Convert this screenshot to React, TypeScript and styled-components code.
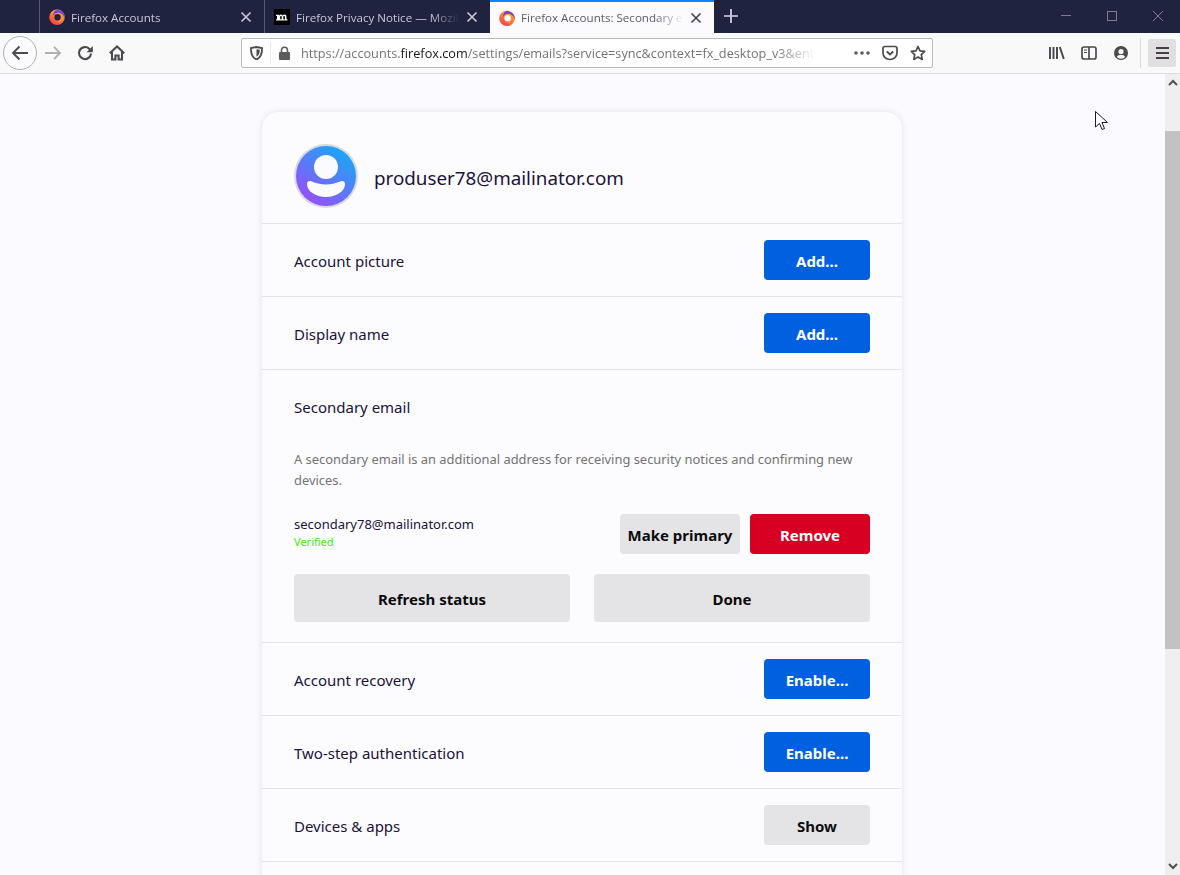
import styled, { createGlobalStyle } from "styled-components";

const GlobalStyle = createGlobalStyle`
  html, body { margin: 0; padding: 0; height: 100%; overflow: hidden; }
  #root { height: 100%; }
  * { box-sizing: border-box; }
`;

const uiFont = `"Open Sans", "Noto Sans", "Liberation Sans", sans-serif`;
const pageFont = `"Noto Sans", "Open Sans", "Liberation Sans", sans-serif`;

const Firefox = ({ id }: { id: string }) => (
  <svg width="16" height="16" viewBox="0 0 16 16">
    <defs>
      <linearGradient id={id} x1="0.75" y1="0.05" x2="0.25" y2="1">
        <stop offset="0" stopColor="#ffc22e" />
        <stop offset="0.5" stopColor="#ff7a2b" />
        <stop offset="1" stopColor="#f0365c" />
      </linearGradient>
    </defs>
    {/* orange body with the hole in the middle */}
    <path
      fillRule="evenodd"
      d="M8 .4a7.800 7.800 0 1 1 0 15.600A7.800 7.800 0 0 1 8 .4zM8.600 5a3.200 3.200 0 1 0 0 6.400 3.200 3.200 0 0 0 0-6.400z"
      fill={`url(#${id})`}
    />
    {/* purple ring over the top right */}
    <path
      d="M6.200 1.500C9.500 .3 13.700 2 15.200 5.500c.6 1.500.7 3 .3 4.500-.3-2.600-1.700-4.800-4-5.800-2-.9-4-.6-5.300.4-1 .8-1.700 1.900-1.900 3C3.900 5.300 4.500 2.700 6.200 1.500z"
      fill="#7b3fd6"
    />
    <path d="M12.300 8.500c.2 2.600-1.700 4.700-4.100 4.900C10.200 12.500 11.500 10.800 12.300 8.500z" fill="#ffd23f" />
  </svg>
);

const MdnLogo = () => (
  <svg width="16" height="16" viewBox="0 0 16 16">
    <rect width="16" height="16" fill="#000" />
    <path d="M2 11.500v-1.200h1V7H2V5.700h3l.2.800c.5-.6 1.100-.9 1.800-.9.8 0 1.300.3 1.600.9.600-.6 1.300-.9 2-.9 1.200 0 1.800.7 1.800 2v2.700h1v1.200H10.200v-1.200h.7V7.700c0-.5-.2-.8-.7-.8-.3 0-.6.1-.9.4v3h.7v1.200H7v-1.200h.7V7.700c0-.5-.2-.8-.6-.8-.3 0-.6.1-.9.4v3h.8v1.200z" fill="#fff" />
  </svg>
);

const CloseIcon = ({ $dark }: { $dark?: boolean }) => (
  <svg width="12" height="12" viewBox="0 0 12 12">
    <path d="M1.500 1.500l9 9m0-9l-9 9" stroke={$dark ? "#45454f" : "#c4c6d4"} strokeWidth="1.700" fill="none" />
  </svg>
);

const AvatarSvg = styled.svg`
  margin-bottom: 3px;
`;

const Avatar = () => (
  <AvatarSvg width="64" height="64" viewBox="0 0 64 64">
    <defs>
      <linearGradient id="avatarFill" x1="0.85" y1="0.1" x2="0.25" y2="0.95">
        <stop offset="0" stopColor="#18a8f5" />
        <stop offset="1" stopColor="#9550fa" />
      </linearGradient>
    </defs>
    <circle cx="32" cy="32" r="32" fill="#d8d8de" />
    <circle cx="32" cy="32" r="30" fill="url(#avatarFill)" />
    <circle cx="32" cy="23" r="12" fill="#fbfbff" />
    <path d="M13 40c0-2.200 2-3.400 4-2.700 4.500 1.900 9.500 3.200 15 3.200s10.500-1.300 15-3.200c2-.7 4 .5 4 2.700C51 47.500 42 53 32 53S13 47.500 13 40z" fill="#fbfbff" />
  </AvatarSvg>
);

const Shell = styled.div`
  width: 1180px;
  height: 875px;
  display: flex;
  flex-direction: column;
  overflow: hidden;
  position: relative;
  background: #fbfbff;
  font-family: ${uiFont};
`;

const TitleBar = styled.div`
  height: 33px;
  flex: none;
  display: flex;
  align-items: stretch;
  background: #202340;
  padding-left: 39px;
`;

const Tab = styled.div<{ $width: number; $active?: boolean }>`
  width: ${(p) => p.$width}px;
  display: flex;
  align-items: center;
  gap: 6px;
  padding: ${(p) => (p.$active ? "0" : "1px")} 12px 0 9px;
  font-size: 11.600px;
  color: ${(p) => (p.$active ? "#5b5b66" : "#c6c8d6")};
  background: ${(p) => (p.$active ? "#fbfbfe" : "transparent")};
  border-top: ${(p) => (p.$active ? "2px solid #0a84ff" : "none")};
  border-left: ${(p) => (p.$active ? "none" : "1px solid #585a70")};
`;

const TabTitle = styled.span`
  flex: 1;
  white-space: nowrap;
  overflow: hidden;
  -webkit-mask-image: linear-gradient(to right, #000 82%, transparent 100%);
  mask-image: linear-gradient(to right, #000 82%, transparent 100%);
`;

const NewTab = styled.div`
  width: 34px;
  padding-bottom: 2px;
  display: flex;
  align-items: center;
  justify-content: center;
`;

const WindowControls = styled.div`
  margin-left: auto;
  display: flex;
  align-items: center;
  gap: 22px;
  padding: 0 10px 2px 0;
`;

const WindowButton = styled.div`
  width: 24px;
  height: 12px;
  display: flex;
  align-items: center;
  justify-content: center;
`;

const Toolbar = styled.div`
  height: 41px;
  flex: none;
  display: flex;
  align-items: center;
  background: #f9f9fa;
  border-bottom: 1px solid #dcdce0;
  padding: 0 4px 0 3px;
`;

const BackButton = styled.div`
  width: 34px;
  height: 34px;
  border: 1px solid #b1b1b5;
  border-radius: 50%;
  display: flex;
  align-items: center;
  justify-content: center;
  background: #fbfbfe;
`;

const ToolIcon = styled.div`
  width: 32px;
  height: 28px;
  display: flex;
  align-items: center;
  justify-content: center;
`;

const UrlBar = styled.div`
  margin-left: 108px;
  width: 692px;
  height: 30px;
  display: flex;
  align-items: center;
  background: #fff;
  border: 1px solid #b9b9bb;
  border-radius: 2px;
`;

const UrlShield = styled.div`
  width: 29px;
  height: 22px;
  display: flex;
  align-items: center;
  justify-content: center;
  border-right: 1px solid #e6e6e8;
`;

const UrlLock = styled.div`
  width: 30px;
  padding-right: 3px;
  display: flex;
  justify-content: center;
`;

const UrlText = styled.div`
  width: 515px;
  font-size: 12.700px;
  color: #737373;
  white-space: nowrap;
  overflow: hidden;
  -webkit-mask-image: linear-gradient(to right, #000 92%, transparent 100%);
  mask-image: linear-gradient(to right, #000 92%, transparent 100%);
  b { font-weight: 400; color: #17171a; }
`;

const UrlActions = styled.div`
  margin-left: auto;
  display: flex;
  align-items: center;
  gap: 12px;
  padding-right: 6px;
`;

const ToolbarRight = styled.div`
  margin-left: auto;
  display: flex;
  align-items: center;
`;

const Divider = styled.div`
  width: 1px;
  height: 30px;
  background: #dcdce0;
  margin: 0 7px 0 3px;
`;

const MenuButton = styled.div`
  width: 28px;
  height: 28px;
  border-radius: 2px;
  background: #e0e0e3;
  display: flex;
  align-items: center;
  justify-content: center;
`;

const Viewport = styled.div`
  flex: 1;
  min-height: 0;
  display: flex;
  overflow: hidden;
`;

const Page = styled.main`
  flex: 1;
  padding-top: 38px;
  display: flex;
  justify-content: center;
  font-family: ${pageFont};
`;

const Card = styled.section`
  width: 640px;
  height: 900px;
  border-radius: 16px;
  background: #fcfcff;
  box-shadow: 0 0 6px rgba(60, 60, 80, 0.14);
  margin-left: -1px;
`;

const Profile = styled.header`
  height: 112px;
  display: flex;
  align-items: center;
  gap: 16px;
  padding: 20px 32px 0;
  border-bottom: 1px solid #e2e2e8;
  font-size: 18.800px;
  color: #20123a;
`;

const Row = styled.div`
  height: 73px;
  display: flex;
  align-items: center;
  justify-content: space-between;
  padding: 0 32px;
  border-bottom: 1px solid #e2e2e8;
  font-size: 15px;
  color: #20123a;
`;

const RowLabel = styled.span`
  padding-top: 2px;
`;

const Button = styled.button<{ $kind?: "primary" | "danger" | "plain" }>`
  height: 40px;
  width: ${(p) => (p.$kind === "danger" ? "120px" : "106px")};
  border: none;
  border-radius: 4px;
  font-family: ${pageFont};
  font-size: 15px;
  font-weight: 700;
  padding: 2px 0 0;
  color: ${(p) => (p.$kind === "plain" ? "#0c0c0d" : "#fff")};
  background: ${(p) =>
    p.$kind === "primary" ? "#0060df" : p.$kind === "danger" ? "#d70022" : "#e4e4e6"};
`;

const MakePrimary = styled(Button)`
  width: 120px;
`;

const WideButton = styled(Button)`
  flex: 1;
  width: auto;
  height: 48px;
`;

const Expanded = styled.div`
  height: 273px;
  padding: 0 32px;
  border-bottom: 1px solid #e2e2e8;
  color: #20123a;
  font-size: 15px;
`;

const ExpandedTitle = styled.div`
  height: 75px;
  padding-bottom: 2px;
  display: flex;
  align-items: center;
`;

const Description = styled.p`
  margin: 0;
  height: 69px;
  font-size: 12.900px;
  line-height: 21px;
  color: #737373;
  padding-top: 4px;
`;

const EmailRow = styled.div`
  height: 40px;
  display: flex;
  align-items: center;
  justify-content: space-between;
`;

const EmailBlock = styled.div`
  font-size: 13px;
  line-height: 18px;
  padding-bottom: 4px;
`;

const Verified = styled.div`
  margin-top: 2px;
  font-size: 11px;
  line-height: 14px;
  color: #3fe80c;
`;

const EmailActions = styled.div`
  display: flex;
  gap: 10px;
`;

const WideRow = styled.div`
  margin-top: 20px;
  display: flex;
  gap: 24px;
`;

const Scrollbar = styled.div`
  width: 15px;
  flex: none;
  display: flex;
  flex-direction: column;
  background: #efefef;
`;

const ScrollArrow = styled.div`
  height: 17px;
  flex: none;
  display: flex;
  align-items: center;
  justify-content: center;
`;

const ScrollGap = styled.div`
  height: 40px;
  flex: none;
`;

const ScrollThumb = styled.div`
  height: 518px;
  flex: none;
  background: #c2c2c2;
`;

const ScrollRest = styled.div`
  flex: 1;
`;

const Cursor = styled.svg`
  position: absolute;
  left: 1095px;
  top: 111px;
`;

const iconColor = "#4a4a4f";

export default function App() {
  return (
    <Shell>
      <GlobalStyle />
      <TitleBar>
        <Tab $width={225}>
          <Firefox id="ff1" />
          <TabTitle>Firefox Accounts</TabTitle>
          <CloseIcon />
        </Tab>
        <Tab $width={226}>
          <MdnLogo />
          <TabTitle>Firefox Privacy Notice — Mozilla</TabTitle>
          <CloseIcon />
        </Tab>
        <Tab $width={224} $active>
          <Firefox id="ff2" />
          <TabTitle>Firefox Accounts: Secondary email</TabTitle>
          <CloseIcon $dark />
        </Tab>
        <NewTab>
          <svg width="14" height="14" viewBox="0 0 14 14">
            <path d="M7 0v14M0 7h14" stroke="#d6d8e4" strokeWidth="1.700" />
          </svg>
        </NewTab>
        <WindowControls>
          <WindowButton>
            <svg width="10" height="1" viewBox="0 0 10 1"><rect width="10" height="1" fill="#7c7e92" /></svg>
          </WindowButton>
          <WindowButton>
            <svg width="10" height="10" viewBox="0 0 10 10"><rect x="0.500" y="0.500" width="9" height="9" fill="none" stroke="#7c7e92" /></svg>
          </WindowButton>
          <WindowButton>
            <svg width="10" height="10" viewBox="0 0 10 10"><path d="M0 0l10 10M10 0L0 10" stroke="#7c7e92" /></svg>
          </WindowButton>
        </WindowControls>
      </TitleBar>

      <Toolbar>
        <BackButton>
          <svg width="18" height="16" viewBox="0 0 18 16">
            <path d="M17 8H2M8.500 1.500L2 8l6.500 6.500" fill="none" stroke={iconColor} strokeWidth="1.900" />
          </svg>
        </BackButton>
        <ToolIcon>
          <svg width="18" height="16" viewBox="0 0 18 16">
            <path d="M1 8h15M10 1.800L16 8l-6 6.200" fill="none" stroke="#b1b1b3" strokeWidth="1.900" />
          </svg>
        </ToolIcon>
        <ToolIcon>
          <svg width="16" height="16" viewBox="0 0 16 16">
            <path d="M14 8.500a6 6 0 1 1-1.800-4.800L14 5.500" fill="none" stroke={iconColor} strokeWidth="2.200" />
            <path d="M15.800 1v6.200H9.600z" fill={iconColor} />
          </svg>
        </ToolIcon>
        <ToolIcon>
          <svg width="16" height="16" viewBox="0 0 16 16">
            <path d="M.8 8.200L8 1.500l7.200 6.700M3 6.500V14.500h3.400v-4h3.200v4H13V6.500" fill="none" stroke={iconColor} strokeWidth="2.100" />
          </svg>
        </ToolIcon>
        <UrlBar>
          <UrlShield>
            <svg width="13" height="14" viewBox="0 0 13 14">
              <path d="M1 2l5.500-1L12 2c.2 5-1 9.500-5.500 11.500C2 11.500.8 7 1 2z" fill="none" stroke={iconColor} strokeWidth="1.800" />
              <path d="M6.500 3.200l3.300.5c0 3.200-.9 5.600-3.300 7.100z" fill={iconColor} />
            </svg>
          </UrlShield>
          <UrlLock>
            <svg width="13" height="14" viewBox="0 0 13 14">
              <path d="M3.500 6V4.200a3 3 0 0 1 6 0V6" fill="none" stroke="#5c5c5f" strokeWidth="1.600" />
              <rect x="1" y="6" width="11" height="8" rx="1" fill="#5c5c5f" />
            </svg>
          </UrlLock>
          <UrlText>
            https://accounts.<b>firefox.com</b>/settings/emails?service=sync&amp;context=fx_desktop_v3&amp;entrypoint
          </UrlText>
          <UrlActions>
            <svg width="16" height="4" viewBox="0 0 16 4">
              <circle cx="2" cy="2" r="1.800" fill="#5c5c5f" />
              <circle cx="8" cy="2" r="1.800" fill="#5c5c5f" />
              <circle cx="14" cy="2" r="1.800" fill="#5c5c5f" />
            </svg>
            <svg width="16" height="16" viewBox="0 0 16 16">
              <path d="M1 3.500C1 2.500 1.700 1.500 3 1.500h10c1.300 0 2 1 2 2V8a7 6.500 0 0 1-14 0z" fill="none" stroke={iconColor} strokeWidth="1.700" />
              <path d="M4.800 6.500L8 9.500l3.200-3" fill="none" stroke={iconColor} strokeWidth="1.900" />
            </svg>
            <svg width="16" height="16" viewBox="0 0 16 16">
              <path d="M8 1.500l2 4.300 4.700.6-3.400 3.300.9 4.700L8 12.100l-4.200 2.300.9-4.700L1.300 6.400 6 5.800z" fill="none" stroke={iconColor} strokeWidth="1.700" strokeLinejoin="round" />
            </svg>
          </UrlActions>
        </UrlBar>
        <ToolbarRight>
          <ToolIcon>
            <svg width="16" height="14" viewBox="0 0 16 14">
              <path d="M1 1v12M4.500 1v12M8 1v12M10.800 1l4 12" stroke={iconColor} strokeWidth="2" fill="none" />
            </svg>
          </ToolIcon>
          <ToolIcon>
            <svg width="16" height="14" viewBox="0 0 16 14">
              <rect x="1" y="1" width="14" height="12" rx="2" fill="none" stroke={iconColor} strokeWidth="1.700" />
              <path d="M8 1v12" stroke={iconColor} strokeWidth="1.700" />
              <path d="M3 4h3M3 6.500h3" stroke={iconColor} strokeWidth="1.200" />
            </svg>
          </ToolIcon>
          <ToolIcon>
            <svg width="14" height="14" viewBox="0 0 14 14">
              <circle cx="7" cy="7" r="7" fill={iconColor} />
              <circle cx="7" cy="5.500" r="2.600" fill="#f9f9fa" />
              <path d="M2.800 11c.8-1.600 2.400-2.300 4.200-2.300s3.400.7 4.200 2.300A5.500 5.500 0 0 1 7 12.700 5.500 5.500 0 0 1 2.800 11z" fill="#f9f9fa" />
            </svg>
          </ToolIcon>
          <Divider />
          <MenuButton>
            <svg width="13" height="12" viewBox="0 0 13 12">
              <path d="M0 1h13M0 6h13M0 11h13" stroke="#4a3f42" strokeWidth="1.800" />
            </svg>
          </MenuButton>
        </ToolbarRight>
      </Toolbar>

      <Viewport>
        <Page>
          <Card>
            <Profile>
              <Avatar />
              produser78@mailinator.com
            </Profile>
            <Row>
              <RowLabel>Account picture</RowLabel>
              <Button $kind="primary">Add...</Button>
            </Row>
            <Row>
              <RowLabel>Display name</RowLabel>
              <Button $kind="primary">Add...</Button>
            </Row>
            <Expanded>
              <ExpandedTitle>Secondary email</ExpandedTitle>
              <Description>
                A secondary email is an additional address for receiving security notices and confirming new devices.
              </Description>
              <EmailRow>
                <EmailBlock>
                  secondary78@mailinator.com
                  <Verified>Verified</Verified>
                </EmailBlock>
                <EmailActions>
                  <MakePrimary $kind="plain">Make primary</MakePrimary>
                  <Button $kind="danger">Remove</Button>
                </EmailActions>
              </EmailRow>
              <WideRow>
                <WideButton $kind="plain">Refresh status</WideButton>
                <WideButton $kind="plain">Done</WideButton>
              </WideRow>
            </Expanded>
            <Row>
              <RowLabel>Account recovery</RowLabel>
              <Button $kind="primary">Enable...</Button>
            </Row>
            <Row>
              <RowLabel>Two-step authentication</RowLabel>
              <Button $kind="primary">Enable...</Button>
            </Row>
            <Row>
              <RowLabel>Devices &amp; apps</RowLabel>
              <Button $kind="plain">Show</Button>
            </Row>
          </Card>
        </Page>
        <Scrollbar>
          <ScrollArrow>
            <svg width="10" height="7" viewBox="0 0 10 7"><path d="M1 6l4-4 4 4" fill="none" stroke="#505050" strokeWidth="2" /></svg>
          </ScrollArrow>
          <ScrollGap />
          <ScrollThumb />
          <ScrollRest />
          <ScrollArrow>
            <svg width="10" height="7" viewBox="0 0 10 7"><path d="M1 1l4 4 4-4" fill="none" stroke="#505050" strokeWidth="2" /></svg>
          </ScrollArrow>
        </Scrollbar>
      </Viewport>

      <Cursor width="13" height="20" viewBox="0 0 13 20">
        <path d="M0.500 0.500v15.500l4-3.500 2.500 6 2.500-1-2.500-6h5.500z" fill="#fff" stroke="#1b1b22" strokeWidth="1" />
      </Cursor>
    </Shell>
  );
}
